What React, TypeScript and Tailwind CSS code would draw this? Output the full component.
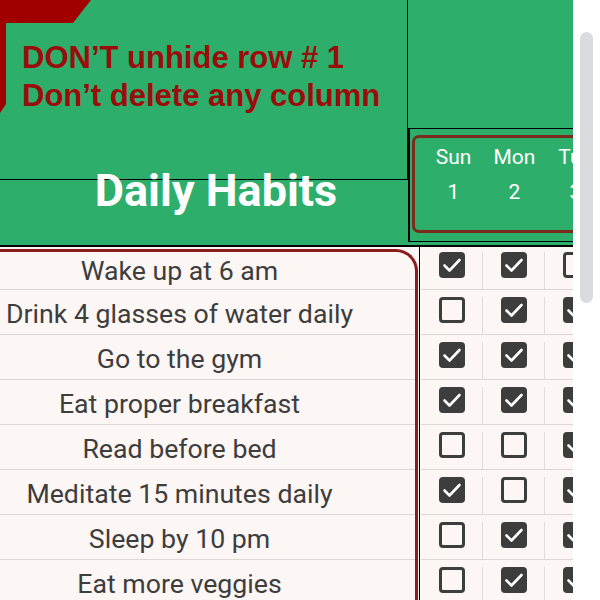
const habits: { name: string; days: boolean[] }[] = [
  { name: 'Wake up at 6 am', days: [true, true, false] },
  { name: 'Drink 4 glasses of water daily', days: [false, true, true] },
  { name: 'Go to the gym', days: [true, true, true] },
  { name: 'Eat proper breakfast', days: [true, true, true] },
  { name: 'Read before bed', days: [false, false, true] },
  { name: 'Meditate 15 minutes daily', days: [true, false, true] },
  { name: 'Sleep by 10 pm', days: [false, true, true] },
  { name: 'Eat more veggies', days: [false, true, true] },
]

const dayCols = [
  { label: 'Sun', num: 1 },
  { label: 'Mon', num: 2 },
  { label: 'Tue', num: 3 },
]

function Checkbox({ checked }: { checked: boolean }) {
  if (!checked) {
    return <div className="h-[26px] w-[26px] shrink-0 rounded-[4px] border-[3px] border-[#3d3d3d]" />
  }
  return (
    <div className="flex h-[26px] w-[26px] shrink-0 items-center justify-center rounded-[4px] bg-[#3d3d3d]">
      <svg width="26" height="26" viewBox="0 0 26 26" fill="none">
        <path d="M5.5 13.5 L10.5 18.5 L20.5 8" stroke="white" strokeWidth="2.6" strokeLinecap="round" strokeLinejoin="round" />
      </svg>
    </div>
  )
}

export default function App() {
  return (
    <div className="flex h-[600px] w-[600px] overflow-hidden bg-white font-['Roboto',sans-serif]">
      <div className="w-[573px] shrink-0 overflow-hidden">
        {/* header */}
        <div className="flex h-[245px] bg-[#2daf6b]">
          <div className="flex w-[408px] shrink-0 flex-col">
            <div className="relative h-[180px] border-b border-r border-black pl-[22px] pt-[39px]">
              <svg className="absolute left-0 top-0" width="95" height="115" viewBox="0 0 95 115">
                <polygon points="0,0 91,0 73,23 6,23 6,104 0,113" fill="#a00000" />
              </svg>
              <p className="relative font-['Liberation_Sans',Arial,sans-serif] text-[31px] font-bold leading-[38px] text-[#9b0c0c]">
                DON’T unhide row # 1
                <br />
                Don’t delete any column
              </p>
            </div>
            <div className="relative -mt-[12px] pl-[24px] text-center text-[45px] font-bold leading-[45px] text-white">
              Daily Habits
            </div>
          </div>
          <div className="flex min-w-0 flex-1 flex-col">
            <div className="h-[129px] border-b border-black" />
            <div className="h-[113px] overflow-hidden border-b border-l-2 border-black pl-[2px] pt-[6px]">
              <div className="flex h-[98px] w-[220px] rounded-[7px] border-[3px] border-[#7d2a1e] pl-[8px] pt-[2px]">
                {dayCols.map((d) => (
                  <div key={d.label} className="flex w-[61px] shrink-0 flex-col items-center text-[21px] leading-[35px] text-white">
                    <span>{d.label}</span>
                    <span>{d.num}</span>
                  </div>
                ))}
              </div>
            </div>
          </div>
        </div>

        {/* body */}
        <div className="flex border-t-2 border-black bg-[#fcf6f4]">
          <div className="w-[420px] shrink-0 border-r border-black pt-[2px]">
            <div className="mr-[1px] rounded-tr-[22px] border-r-[3px] border-t-[3px] border-[#8c1d1d]">
              {habits.map((h, i) => (
                <div
                  key={h.name}
                  className={`flex items-center justify-center whitespace-nowrap border-b border-[#ddd6d4] pr-[56px] text-[26.7px] text-[#3d3d3d] ${i === 0 ? 'h-[38px] pt-[1px]' : 'h-[45px] pt-[4px]'}`}
                >
                  {h.name}
                </div>
              ))}
            </div>
          </div>
          <div className="min-w-0 flex-1 pl-[1px]">
            {habits.map((h, i) => (
              <div key={h.name} className={`flex border-b border-[#ddd6d4] ${i === 0 ? 'h-[43px] pt-[5px]' : 'h-[45px] pt-[7px]'}`}>
                {h.days.map((c, j) => (
                  <div key={j} className="flex w-[62px] shrink-0 justify-center border-r border-[#e2dbd9]">
                    <Checkbox checked={c} />
                  </div>
                ))}
              </div>
            ))}
          </div>
        </div>
      </div>
      <div className="flex-1 bg-white pl-[7px] pt-[32px]">
        <div className="h-[271px] w-[13px] rounded-full bg-[#dadbdf]" />
      </div>
    </div>
  )
}
